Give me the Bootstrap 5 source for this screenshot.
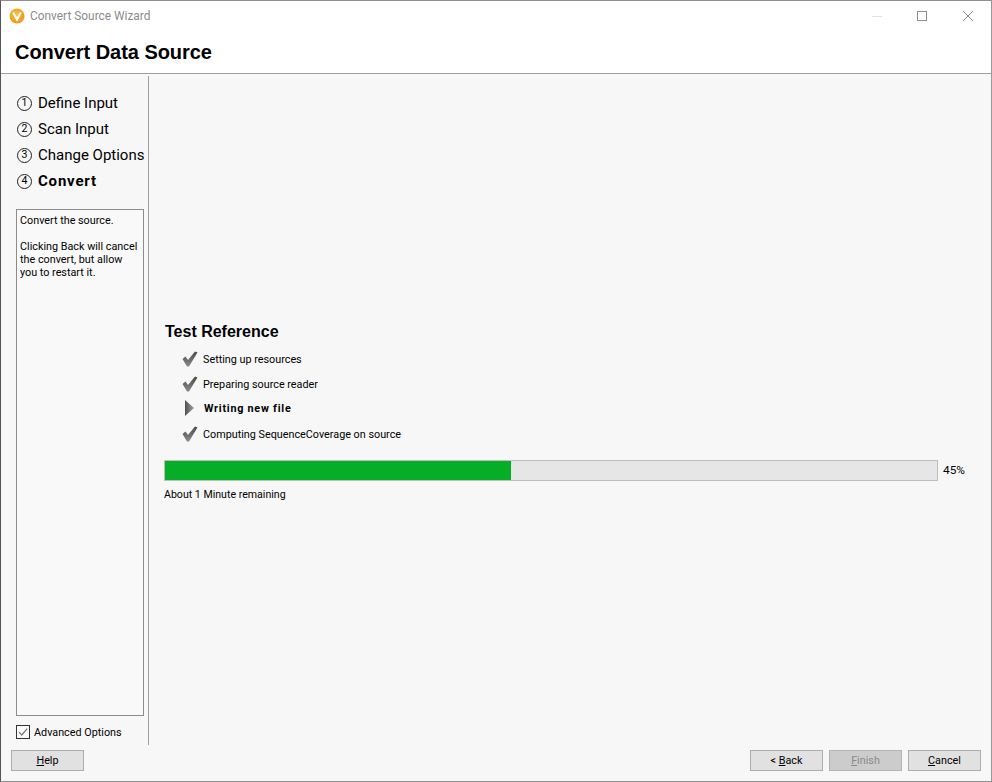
<!DOCTYPE html>
<html lang="en">
<head>
<meta charset="utf-8">
<title>Convert Source Wizard</title>
<link rel="stylesheet" href="https://cdn.jsdelivr.net/npm/bootstrap@5.3.0/dist/css/bootstrap.min.css">
<style>
html,body{height:100%;margin:0;overflow:hidden;background:#f7f7f7}
body{font-family:Roboto,"Liberation Sans",sans-serif;font-size:10.8px;color:#000;line-height:13px}
.win{width:992px;height:782px;background:#f7f7f7;border:1px solid #8f8f8f;border-left-color:#555;border-right-color:#999}
.head-area{background:#fff;height:73px;border-bottom:1px solid #a0a0a0}
.tbar{height:29px;padding-left:8px;color:#8c8c8c;font-size:11.9px}
.tbar .tname{margin-left:5px;padding-top:1px}
.wctl{margin-left:auto;padding-right:18px;gap:35px}
.wctl svg:nth-child(2){margin-right:1px}
.htitle{font-family:"Liberation Sans",sans-serif;font-weight:700;font-size:20px;line-height:24px;padding:10px 0 0 14px;margin:0;letter-spacing:-.05px}
.mainrow{height:672px;padding-top:2px}
.side{width:148px;border-right:1px solid #a0a0a0;height:669px;flex:none}
.steps{padding:14px 0 0 16px;height:133px;font-size:15px;line-height:26px;list-style:none;margin:0}
.steps li{white-space:nowrap;display:flex;align-items:center}
.steps b{letter-spacing:.8px}
.stepno{display:inline-flex;align-items:center;justify-content:center;width:15px;height:15px;border:1px solid #222;border-radius:50%;margin-right:6px;font-size:10.5px;line-height:1;flex:none}
.help-box{margin-left:15px;width:128px;height:507px;border:1px solid #8c8c8c;background:#f9f9f9;padding:4px 3px;line-height:13px}
.adv{margin:9px 0 0 15px;gap:4px;height:14px}
.cbx{width:14px;height:14px;border:1px solid #333;background:#fbfbfb;display:flex;align-items:center;justify-content:center;flex:none}
.content{padding:0 15px;flex:1;min-width:0}
.prog-head{font-family:"Liberation Sans",sans-serif;font-weight:700;font-size:16px;line-height:20px;margin:0 0 5px 1px;padding-top:246px}
.tasks{list-style:none;margin:0 0 0 18px;padding:0}
.tasks li{display:flex;align-items:center;height:25px;gap:5px}
.tasks svg{flex:none;margin-top:-2px}
.tasks b{letter-spacing:.75px;margin:-2px 0 0 1px}
.tasks .arrowrow svg{margin-top:-4px}
.pwrap{margin-top:13px;gap:5px}
.ptrack{width:774px;height:21px;background:#e6e6e6;border:1px solid #bdbdbd}
.pfill{height:100%;background:#06ad26}
.ppct{font-size:11.8px}
.premain{margin-top:7px;font-size:10.6px}
.fbar{padding:4px 10px 0}
.wbtn{width:73px;height:21px;padding:0;border:1px solid #adadad;background:#e1e1e1;border-radius:0;font-size:10.8px;line-height:19px;color:#000;text-align:center}
.wbtn:disabled{background:#cccccc;border-color:#b4b4b4;color:#8a8a8a;opacity:1}
.wbtn u{text-underline-offset:1px}
.fgap{gap:6px}
.gdefs{width:0;height:0;position:absolute}
</style>
</head>
<body>
<svg class="gdefs" aria-hidden="true"><defs>
<linearGradient id="chk" x1="0" y1="0" x2="0" y2="1"><stop offset="0" stop-color="#4a4a4a"/><stop offset="1" stop-color="#8a8a8a"/></linearGradient>
<linearGradient id="arr" x1="0" y1="0" x2="1" y2="0"><stop offset="0" stop-color="#4f4f4f"/><stop offset="1" stop-color="#a0a0a0"/></linearGradient>
<radialGradient id="og" cx="45%" cy="40%" r="65%"><stop offset="0" stop-color="#fcc23a"/><stop offset="1" stop-color="#e8941a"/></radialGradient>
<path id="tick" d="M0.5 8 3.5 5.5 6 9 13 0.5 15.5 1.5 7 15.5 5 15.5Z"/>
</defs></svg>
<div class="win d-flex flex-column">
  <div class="head-area">
    <div class="tbar d-flex align-items-center">
      <svg width="16" height="16" viewBox="0 0 16 16"><circle cx="8" cy="8" r="7.5" fill="url(#og)"/><path d="M4.2 4.6 8 11.6 11.8 4.6" fill="none" stroke="#fff" stroke-width="2.1"/></svg>
      <span class="tname">Convert Source Wizard</span>
      <div class="wctl d-flex align-items-center">
        <svg width="10" height="10" viewBox="0 0 10 10"><path d="M0 5.5H10" stroke="#e2e2e2"/></svg>
        <svg width="10" height="10" viewBox="0 0 10 10"><rect x=".5" y=".5" width="9" height="9" fill="none" stroke="#8f8f8f"/></svg>
        <svg width="10" height="10" viewBox="0 0 10 10"><path d="M0 0 10 10M10 0 0 10" stroke="#8f8f8f"/></svg>
      </div>
    </div>
    <h1 class="htitle">Convert Data Source</h1>
  </div>
  <div class="mainrow d-flex">
    <div class="side">
      <ol class="steps">
        <li><span class="stepno">1</span>Define Input</li>
        <li><span class="stepno">2</span>Scan Input</li>
        <li><span class="stepno">3</span>Change Options</li>
        <li><span class="stepno">4</span><b>Convert</b></li>
      </ol>
      <div class="help-box">Convert the source.<br><br>Clicking Back will cancel the convert, but allow you to restart it.</div>
      <div class="adv d-flex align-items-center">
        <span class="cbx"><svg width="12" height="12" viewBox="0 0 12 12"><path d="M2 6.2 4.8 9 10.2 2.6" fill="none" stroke="#777" stroke-width="1.2"/></svg></span>
        <span>Advanced Options</span>
      </div>
    </div>
    <div class="content">
      <h2 class="prog-head">Test Reference</h2>
      <ul class="tasks">
        <li><svg width="16" height="16" viewBox="0 0 16 16" fill="url(#chk)"><use href="#tick"/></svg><span>Setting up resources</span></li>
        <li><svg width="16" height="16" viewBox="0 0 16 16" fill="url(#chk)"><use href="#tick"/></svg><span>Preparing source reader</span></li>
        <li class="arrowrow"><svg width="16" height="16" viewBox="0 0 16 16"><path d="M3 0 12 8 3 16Z" fill="url(#arr)"/></svg><b>Writing new file</b></li>
        <li><svg width="16" height="16" viewBox="0 0 16 16" fill="url(#chk)"><use href="#tick"/></svg><span>Computing SequenceCoverage on source</span></li>
      </ul>
      <div class="pwrap d-flex align-items-center">
        <div class="ptrack"><div class="pfill" style="width:44.8%"></div></div>
        <span class="ppct">45%</span>
      </div>
      <div class="premain">About 1 Minute remaining</div>
    </div>
  </div>
  <div class="fbar d-flex">
    <button class="btn wbtn" type="button"><u>H</u>elp</button>
    <div class="ms-auto d-flex fgap">
      <button class="btn wbtn" type="button">&lt; <u>B</u>ack</button>
      <button class="btn wbtn" type="button" disabled><u>F</u>inish</button>
      <button class="btn wbtn" type="button"><u>C</u>ancel</button>
    </div>
  </div>
</div>
<script src="https://cdn.jsdelivr.net/npm/bootstrap@5.3.0/dist/js/bootstrap.bundle.min.js"></script>
</body>
</html>
